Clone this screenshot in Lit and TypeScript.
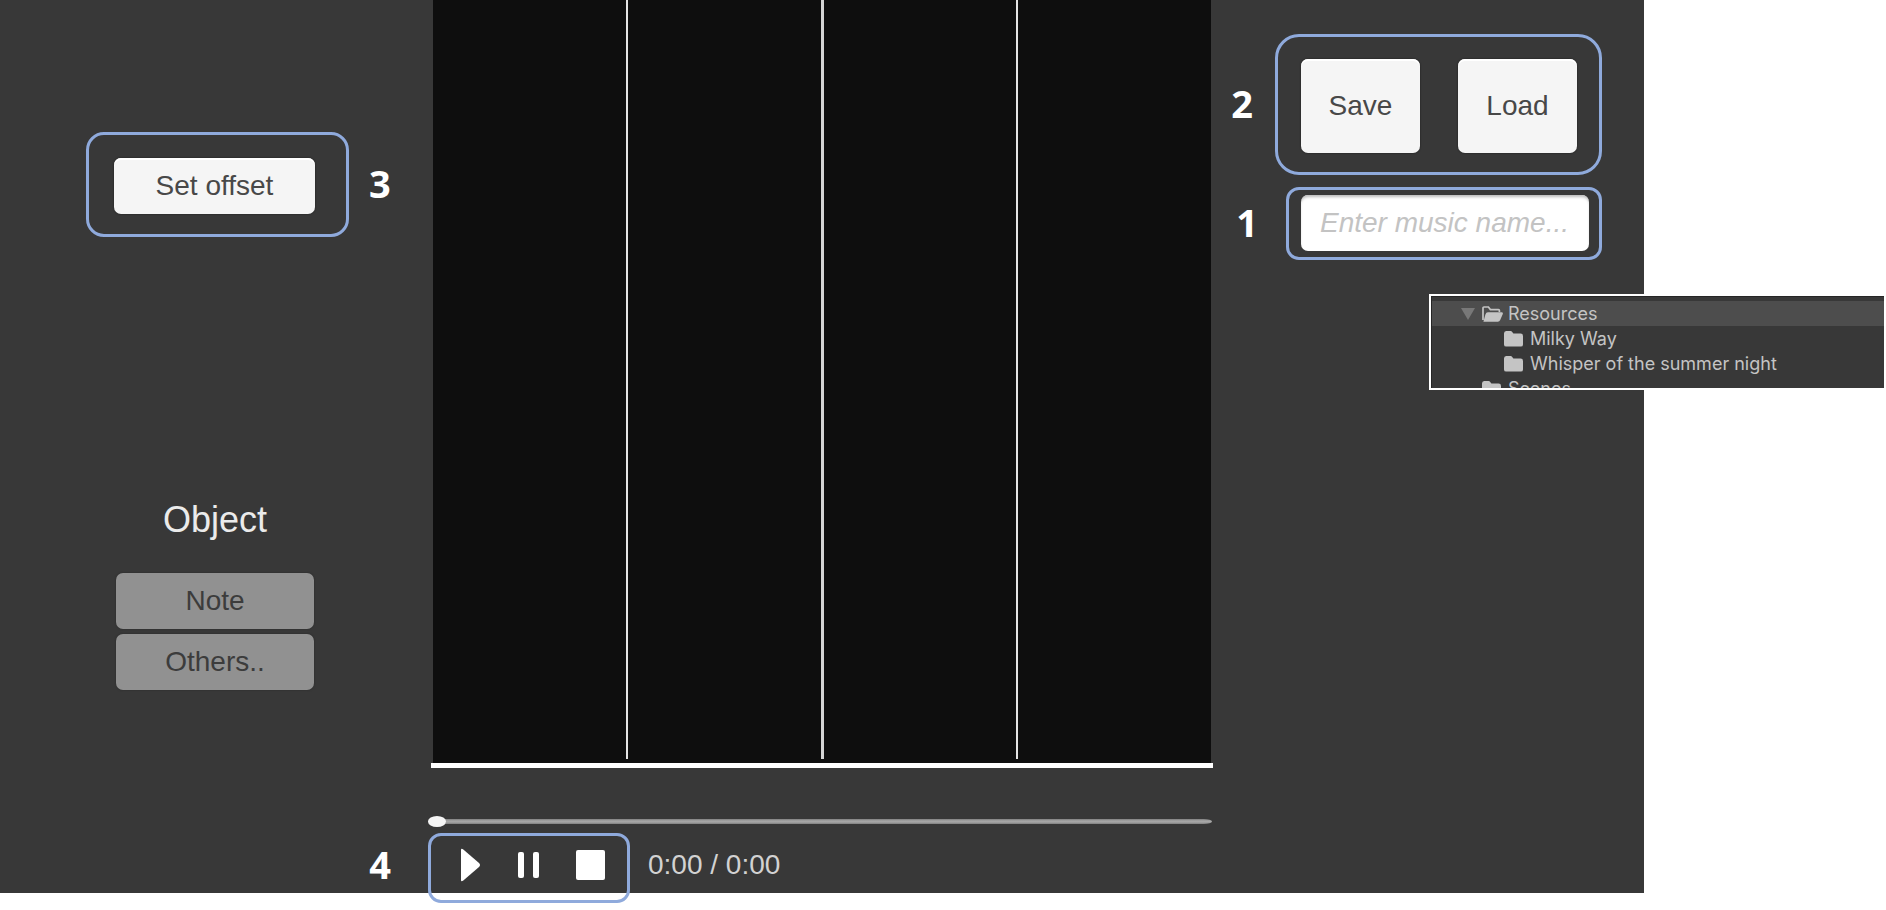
import { LitElement, html, css, svg } from "lit";
import { customElement, property, state } from "lit/decorators.js";

type FolderRow = { name: string; depth: number; open?: boolean };

const FOLDERS: FolderRow[] = [
  { name: "Resources", depth: 0, open: true },
  { name: "Milky Way", depth: 1 },
  { name: "Whisper of the summer night", depth: 1 },
  { name: "Scenes", depth: 0 },
];

const closedFolder = svg`<path d="M0 2.5Q0 0 2.2 0H6.6Q7.6 0 8.2.9L9.4 2.6H16.6Q19 2.6 19 5V13.4Q19 15.6 16.8 15.6H2.2Q0 15.6 0 13.4Z" fill="#c4c4c4"/>`;
const openFolder = svg`
  <path d="M1 14V2Q1 1 2 1H6.4L8.4 3.6H16.4Q17.4 3.6 17.4 4.6V6" fill="none" stroke="#c4c4c4" stroke-width="1.7"/>
  <path d="M3.4 8.4Q4 6.2 6 6.2H19.6Q21.6 6.2 20.8 8L18.2 14Q17.5 15.8 15.8 15.8H1.4Z" fill="#c4c4c4"/>`;

@customElement("folder-tree")
export class FolderTree extends LitElement {
  static styles = css`
    :host {
      display: block;
      box-sizing: border-box;
      height: 96px;
      overflow: hidden;
      border: 2px solid #fff;
      background: #383838;
      color: #c4c4c4;
      font: 18px/24px Inter, "Noto Sans", sans-serif;
    }
    .list {
      margin: 0;
      padding: 4px 0 0;
      list-style: none;
      border-left: 1px solid #262626;
      border-top: 1px solid #262626;
    }
    .row {
      display: flex;
      align-items: center;
      height: 25px;
      padding-left: 29px;
      white-space: nowrap;
    }
    .row.selected { background: #4d4d4d; }
    .row.child { padding-left: 51px; }
    .arrow {
      width: 21px;
      height: 12px;
      flex: none;
    }
    .folder {
      width: 26px;
      height: 16px;
      flex: none;
    }
  `;

  render() {
    return html`
      <ul class="list">
        ${FOLDERS.map(
          (f) => html`
            <li class="row ${f.open ? "selected" : ""} ${f.depth ? "child" : ""}">
              <svg class="arrow" viewBox="0 0 21 12" aria-hidden="true">
                ${f.open ? svg`<path d="M0 0H14L7 12Z" fill="#787878"/>` : ""}
              </svg>
              <svg class="folder" viewBox="0 0 26 16" aria-hidden="true">${f.open ? openFolder : closedFolder}</svg>
              <span>${f.name}</span>
            </li>
          `
        )}
      </ul>
    `;
  }
}

@customElement("step-frame")
export class StepFrame extends LitElement {
  @property() size = "medium";

  static styles = css`
    :host {
      display: block;
      box-sizing: border-box;
      border: 3px solid #8faadc;
      border-radius: 18px;
    }
    :host([size="small"]) { border-radius: 13px; }
    :host([size="large"]) { border-radius: 24px; }
  `;

  render() {
    return html`<slot></slot>`;
  }
}

@customElement("app-root")
export class AppRoot extends LitElement {
  @state() private position = 0;

  static styles = css`
    :host {
      display: block;
      position: relative;
      background: #fff;
      padding-bottom: 17px;
      font-family: "Liberation Sans", Arial, sans-serif;
      font-size: 28px;
      line-height: 32px;
    }
    .editor {
      display: grid;
      grid-template-columns: 428fr 788fr 428fr;
      margin-right: 242px;
      background: #383838;
    }
    .tools { padding: 132px 0 0 86px; }
    .step {
      display: flex;
      align-items: center;
      gap: 20px;
    }
    .number {
      padding-bottom: 3px;
      color: #fff;
      font: bold 38px/40px "Noto Sans", "Open Sans", sans-serif;
    }
    button, input {
      box-sizing: border-box;
      margin: 0;
      padding: 0;
      font: inherit;
      border: 0;
    }
    .button {
      display: block;
      height: 56px;
      border-radius: 7px;
      background: #f5f5f5;
      color: #484848;
      box-shadow: inset 0 2px 0 #fff, 0 0 1px 1px #2f2f2f;
    }
    .offset-frame { padding: 23px 31px 20px 25px; }
    .offset { width: 201px; }
    .objects {
      display: flex;
      flex-direction: column;
      gap: 5px;
      width: 198px;
      margin: 262px 0 0 30px;
    }
    .title {
      margin: 0 0 27px;
      color: #ebebeb;
      font-size: 36px;
      line-height: 42px;
      font-weight: 400;
      text-align: center;
    }
    .object {
      background: #919191;
      color: #3c3c3c;
      box-shadow: 0 0 1px 1px #333;
    }
    .board {
      margin: 0 3px;
      border-bottom: 5px solid #fff;
    }
    .lanes {
      display: flex;
      height: 763px;
      margin: 0 2px;
      background: #0e0e0e;
    }
    .lane { flex: 1; }
    .divider {
      width: 2px;
      height: 759px;
      background: #e4e4e4;
    }
    .divider.middle {
      width: 3px;
      background: #d4d4d4;
    }
    .files {
      display: flex;
      flex-direction: column;
      align-items: flex-end;
      gap: 12px;
      padding: 34px 42px 0 0;
    }
    .files .step { gap: 22px; }
    .files .step.entry { gap: 28px; }
    .file-frame {
      display: flex;
      gap: 38px;
      padding: 22px 22px 19px 23px;
    }
    .file {
      width: 119px;
      height: 94px;
    }
    .name-frame { padding: 5px 10px 6px 12px; }
    .name {
      display: block;
      width: 288px;
      height: 56px;
      padding: 0 19px;
      border-radius: 7px;
      background: #fff;
      color: #323232;
      box-shadow: inset 0 3px 3px -1px #bbb;
    }
    .name::placeholder {
      color: #c3c3c3;
      font-style: italic;
      opacity: 1;
    }
    .seek {
      display: block;
      appearance: none;
      width: calc(100% - 4px);
      height: 12px;
      margin: 47px 0 1px;
      background: transparent;
    }
    .seek::-webkit-slider-runnable-track {
      height: 5px;
      border-radius: 10px / 3px;
      background: linear-gradient(#808080, #a6a6a6 40%, #a6a6a6 60%, #808080);
    }
    .seek::-webkit-slider-thumb {
      appearance: none;
      width: 18px;
      height: 11px;
      margin-top: -3px;
      border-radius: 50%;
      background: #f5f5f5;
    }
    .transport-number {
      display: flex;
      align-items: center;
      justify-content: flex-end;
      padding-right: 37px;
      margin-bottom: -10px;
    }
    .transport {
      display: flex;
      align-items: center;
      gap: 18px;
      margin: 5px 0 -10px;
    }
    .transport-frame {
      display: flex;
      align-items: center;
      justify-content: space-between;
      width: 202px;
      height: 70px;
      padding: 0 21px 6px 29px;
    }
    .control {
      display: block;
      height: 34px;
      background: none;
    }
    .control svg { display: block; }
    .time {
      color: #d2d2d2;
      padding-bottom: 7px;
    }
    .browser {
      position: absolute;
      top: 294px;
      right: 0;
      width: 457px;
    }
  `;

  private seek(e: Event) {
    this.position = Number((e.target as HTMLInputElement).value);
  }

  render() {
    return html`
      <main class="editor">
        <section class="tools">
          <div class="step">
            <step-frame class="offset-frame"><button class="button offset">Set offset</button></step-frame>
            <span class="number">3</span>
          </div>
          <div class="objects">
            <h2 class="title">Object</h2>
            <button class="button object">Note</button>
            <button class="button object">Others..</button>
          </div>
        </section>

        <section>
          <div class="board">
            <div class="lanes">
              <div class="lane"></div>
              <div class="divider"></div>
              <div class="lane"></div>
              <div class="divider middle"></div>
              <div class="lane"></div>
              <div class="divider"></div>
              <div class="lane"></div>
            </div>
          </div>
          <input class="seek" type="range" min="0" max="100" aria-label="Position"
            .value=${String(this.position)} @input=${this.seek} />
        </section>

        <section class="files">
          <div class="step">
            <span class="number">2</span>
            <step-frame size="large" class="file-frame">
              <button class="button file">Save</button>
              <button class="button file">Load</button>
            </step-frame>
          </div>
          <div class="step entry">
            <label class="number" for="music-name">1</label>
            <step-frame size="small" class="name-frame">
              <input class="name" id="music-name" type="text" placeholder="Enter music name..." />
            </step-frame>
          </div>
        </section>

        <div class="transport-number"><span class="number">4</span></div>
        <div class="transport">
          <step-frame size="small" class="transport-frame">
            <button class="control" aria-label="Play">
              <svg width="22" height="34" viewBox="0 0 22 34"><path d="M1 2Q1 0 3 1.2L19 15Q21 17 19 19L3 32.8Q1 34 1 32Z" fill="#fff"/></svg>
            </button>
            <button class="control" aria-label="Pause">
              <svg width="22" height="34" viewBox="0 0 22 34"><rect y="4" width="6" height="26" rx="2" fill="#fff"/><rect x="15" y="4" width="6" height="26" rx="2" fill="#fff"/></svg>
            </button>
            <button class="control" aria-label="Stop">
              <svg width="30" height="34" viewBox="0 0 30 34"><rect y="2" width="29" height="30" rx="2" fill="#fff"/></svg>
            </button>
          </step-frame>
          <span class="time">0:00 / 0:00</span>
        </div>
      </main>
      <folder-tree class="browser"></folder-tree>
    `;
  }
}
